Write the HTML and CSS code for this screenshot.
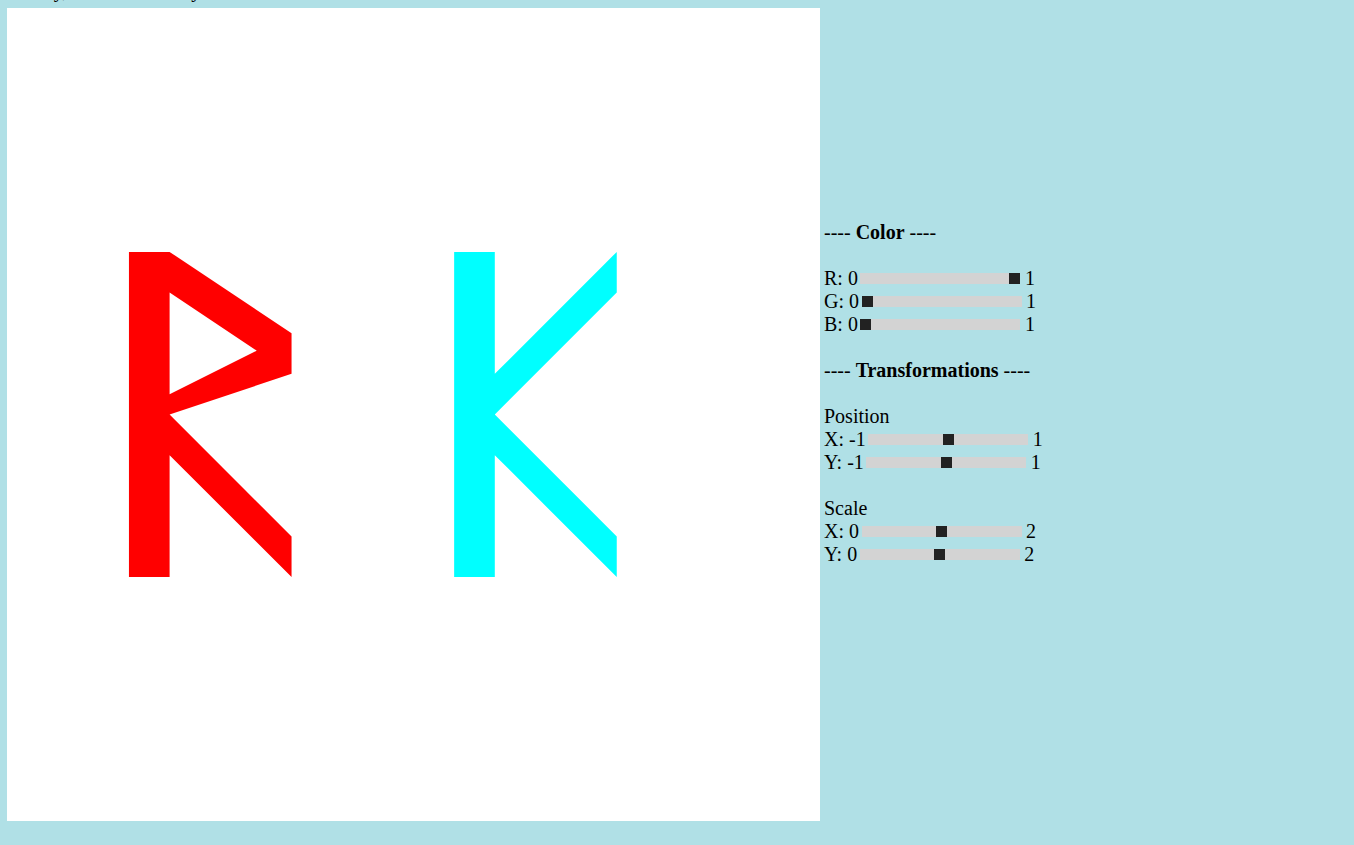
FILE: index.html
```html
<!DOCTYPE html>
<html>
<head>
<meta charset="utf-8">
<title>R K</title>
<link rel="stylesheet" href="styles.css">
</head>
<body>
<div class="caption">Finally, the letters really come alive.</div>
<div class="stage">
  <svg class="canvas" width="813" height="813" viewBox="-1 -1 2 2" xmlns="http://www.w3.org/2000/svg">
    <g transform="scale(1,-1)">
      <path fill="#ff0000" fill-rule="evenodd" d="M-0.7 0.4 L-0.6 0.4 L-0.3 0.2 L-0.3 0.1 L-0.6 0 L-0.3 -0.3 L-0.3 -0.4 L-0.6 -0.1 L-0.6 -0.4 L-0.7 -0.4 Z M-0.6 0.3 L-0.3857 0.157 L-0.6 0.05 Z"/>
      <path fill="#00ffff" d="M0.1 0.4 L0.2 0.4 L0.2 0.1 L0.5 0.4 L0.5 0.3 L0.2 0 L0.5 -0.3 L0.5 -0.4 L0.2 -0.1 L0.2 -0.4 L0.1 -0.4 Z"/>
    </g>
  </svg>
  <div class="panel">
    <div class="line">---- <b>Color</b> ----</div>
    <div class="line"></div>
    <div class="line">R: 0<input class="slider" type="range" min="0" max="1" step="0.01" value="1">1</div>
    <div class="line">G: 0<input class="slider" type="range" min="0" max="1" step="0.01" value="0">1</div>
    <div class="line">B: 0<input class="slider" type="range" min="0" max="1" step="0.01" value="0">1</div>
    <div class="line"></div>
    <div class="line">---- <b>Transformations</b> ----</div>
    <div class="line"></div>
    <div class="line">Position</div>
    <div class="line">X: -1<input class="slider" type="range" min="-1" max="1" step="0.01" value="0">1</div>
    <div class="line">Y: -1<input class="slider" type="range" min="-1" max="1" step="0.01" value="0">1</div>
    <div class="line"></div>
    <div class="line">Scale</div>
    <div class="line">X: 0<input class="slider" type="range" min="0" max="2" step="0.01" value="1">2</div>
    <div class="line">Y: 0<input class="slider" type="range" min="0" max="2" step="0.01" value="1">2</div>
  </div>
</div>
</body>
</html>
```
FILE: styles.css
```css
html, body {
  margin: 0;
  padding: 0;
}
body {
  background: #b0e0e6;
  font-family: "Liberation Serif", "Times New Roman", serif;
  font-size: 20px;
  color: #000;
  overflow: hidden;
}
.caption {
  height: 23px;
  line-height: 23px;
  margin: -21px 0 6px 7px;
  white-space: nowrap;
}
.stage {
  display: flex;
  align-items: center;
  gap: 4px;
  padding-left: 7px;
}
.canvas {
  display: block;
  flex: none;
  background: #ffffff;
}
.panel {
  padding-bottom: 42px;
}
.line {
  height: 23px;
  line-height: 23px;
  white-space: nowrap;
}
.slider {
  -webkit-appearance: none;
  appearance: none;
  width: 160px;
  height: 11px;
  margin: 0 4.5px 3px 2.5px;
  padding: 0;
  background: #d3d3d3;
  outline: none;
  border: none;
  vertical-align: 1px;
}
.slider::-webkit-slider-thumb {
  -webkit-appearance: none;
  appearance: none;
  width: 11px;
  height: 11px;
  background: #222222;
  border: none;
  cursor: pointer;
}
.slider::-moz-range-thumb {
  width: 11px;
  height: 11px;
  background: #222222;
  border: none;
  border-radius: 0;
}
```
